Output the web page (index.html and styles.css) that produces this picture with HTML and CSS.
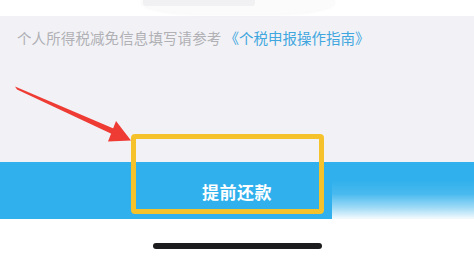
FILE: index.html
```html
<!DOCTYPE html>
<html lang="zh">
<head>
<meta charset="utf-8">
<link rel="stylesheet" href="styles.css">
</head>
<body>
<div class="screen">
  <div class="top">
    <div class="blob"><div class="blob-bar"></div></div>
  </div>
  <div class="content">
    <p class="hint">个人所得税减免信息填写请参考<span class="link">《个税申报操作指南》</span></p>
  </div>
  <div class="action">
    <span class="action-label">提前还款</span>
  </div>
  <div class="bottom">
    <div class="home-indicator"></div>
  </div>

  <div class="highlight"></div>
  <svg class="arrow" width="140" height="150" viewBox="0 0 140 150">
    <polygon points="15,86.5 17,89.5 114,135 117,130" fill="#ee3b33"/>
    <polygon points="131,140.5 116,121 108,141.5" fill="#ee3b33"/>
  </svg>
  <div class="blur-patch"></div>
</div>
</body>
</html>
```

FILE: styles.css
```css
* { box-sizing: border-box; }
html, body { margin: 0; padding: 0; }
body {
  width: 474px;
  height: 258px;
  overflow: hidden;
  font-family: "Noto Sans CJK SC", "Noto Sans", sans-serif;
  background: #ffffff;
}
.screen {
  position: relative;
  width: 474px;
  height: 258px;
  display: flex;
  flex-direction: column;
}
.top {
  height: 16px;
  background: #ffffff;
  display: flex;
  justify-content: center;
}
.blob {
  width: 194px;
  height: 14px;
  margin-left: 2px;
  border-radius: 0 0 60px 60px / 0 0 12px 12px;
  background: #fbfbfc;
  box-shadow: 0 1px 3px rgba(0,0,0,0.03);
  position: relative;
}
.blob-bar {
  position: absolute;
  left: 2px;
  top: 0;
  width: 112px;
  height: 6px;
  background: #f1f1f3;
  border-radius: 0 0 3px 3px;
}
.content {
  height: 146px;
  background: #f2f2f6;
  padding: 13px 17px 0;
}
.hint {
  margin: 0;
  font-size: 14.5px;
  line-height: 18px;
  letter-spacing: 0.1px;
  color: #b0b0b5;
  white-space: nowrap;
}
.link {
  color: #3fa6de;
  margin-left: 3px;
  letter-spacing: 0;
}
.action {
  height: 57px;
  background: #30b0ec;
  display: flex;
  align-items: center;
  justify-content: center;
  padding-top: 2px;
}
.action-label {
  color: #ffffff;
  font-size: 17px;
  font-weight: 700;
  letter-spacing: 0.5px;
}
.bottom {
  flex: 1;
  background: #ffffff;
  display: flex;
  justify-content: center;
  padding-top: 24px;
}
.home-indicator {
  width: 169px;
  height: 6px;
  border-radius: 3px;
  background: #1c1c1e;
}
.highlight {
  position: absolute;
  left: 131px;
  top: 134px;
  width: 193px;
  height: 80px;
  border: 5px solid #f6c22c;
  border-radius: 4px;
}
.arrow {
  position: absolute;
  left: 0;
  top: 0;
}
.blur-patch {
  position: absolute;
  left: 332px;
  top: 180px;
  width: 142px;
  height: 78px;
  background: linear-gradient(to bottom, rgba(255,255,255,0) 0px, rgba(255,255,255,0.12) 14px, rgba(255,255,255,0.55) 28px, rgba(255,255,255,0.92) 38px, #ffffff 46px);
}
```
